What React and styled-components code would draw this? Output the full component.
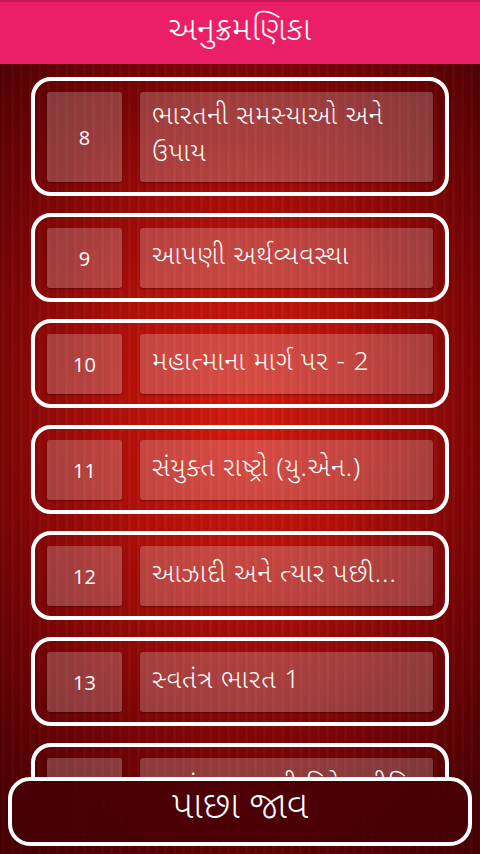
import React from 'react';
import styled, { createGlobalStyle } from 'styled-components';

const GlobalStyle = createGlobalStyle`
  html, body {
    margin: 0;
    padding: 0;
    background: #3a0000;
  }
  * {
    box-sizing: border-box;
  }
`;

const FONT = `"Noto Sans Gujarati", "Lohit Gujarati", "Noto Sans", "DejaVu Sans", sans-serif`;

const Screen = styled.div`
  width: 480px;
  height: 854px;
  display: flex;
  flex-direction: column;
  overflow: hidden;
  font-family: ${FONT};
  font-weight: 300;
  color: #ffffff;
  background:
    repeating-linear-gradient(90deg, rgba(0, 0, 0, 0.07) 0 2px, rgba(255, 255, 255, 0.02) 2px 5px, rgba(0, 0, 0, 0.04) 5px 9px),
    radial-gradient(ellipse 75% 60% at 50% 48%, #d81c10 0%, #b4110a 35%, #7a0406 70%, #4a0004 100%);
`;

const Header = styled.header`
  flex: 0 0 64px;
  display: flex;
  align-items: center;
  justify-content: center;
  background: #ea1f65;
  border-top: 2px solid #c8185a;
  font-size: 33px;
  letter-spacing: 0.5px;
  padding-bottom: 4px;
`;

const List = styled.main`
  flex: 1;
  overflow: hidden;
  display: flex;
  flex-direction: column;
  gap: 17px;
  padding: 13px 31px 0;
`;

const Card = styled.div`
  flex: 0 0 auto;
  display: flex;
  gap: 18px;
  border: 4px solid #ffffff;
  border-radius: 20px;
  padding: 11px 12px 10px;
`;

const Box = styled.div`
  background: rgba(255, 255, 255, 0.22);
  border-radius: 3px;
  box-shadow: 0 1px 2px rgba(0, 0, 0, 0.35);
  display: flex;
  align-items: center;
`;

const NumberBox = styled(Box)`
  flex: 0 0 75px;
  justify-content: center;
  font-family: "Open Sans", "Noto Sans", sans-serif;
  font-weight: 400;
  font-size: 20px;
`;

const TitleBox = styled(Box)`
  flex: 1;
  min-height: 60px;
  padding: 8px 12px;
  font-size: 26px;
  letter-spacing: 1px;
  line-height: 37px;
`;

const Footer = styled.footer`
  flex: 0 0 auto;
  padding: 0 8px 8px;
`;

const BackButton = styled.button`
  width: 100%;
  height: 69px;
  border: 4px solid #ffffff;
  border-radius: 22px;
  background: rgba(70, 0, 6, 0.85);
  color: #ffffff;
  font-family: ${FONT};
  font-weight: 300;
  font-size: 38px;
  padding: 0 0 6px;
`;

const chapters = [
  { n: '8', title: 'ભારતની સમસ્યાઓ અને ઉપાય' },
  { n: '9', title: 'આપણી અર્થવ્યવસ્થા' },
  { n: '10', title: 'મહાત્માના માર્ગ પર - 2' },
  { n: '11', title: 'સંયુક્ત રાષ્ટ્રો (યુ.એન.)' },
  { n: '12', title: 'આઝાદી અને ત્યાર પછી...' },
  { n: '13', title: 'સ્વતંત્ર ભારત 1' },
  { n: '14', title: 'સ્વતંત્ર ભારતની વિદેશ નીતિ' },
];

export default function App() {
  return (
    <>
      <GlobalStyle />
      <Screen>
        <Header>અનુક્રમણિકા</Header>
        <List>
          {chapters.map((c) => (
            <Card key={c.n}>
              <NumberBox>{c.n}</NumberBox>
              <TitleBox>{c.title}</TitleBox>
            </Card>
          ))}
        </List>
        <Footer>
          <BackButton>પાછા જાવ</BackButton>
        </Footer>
      </Screen>
    </>
  );
}
